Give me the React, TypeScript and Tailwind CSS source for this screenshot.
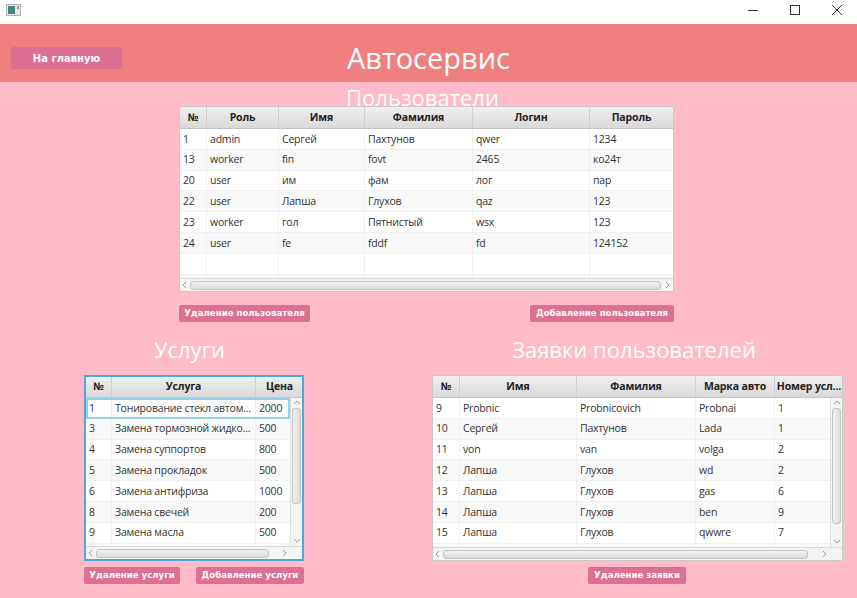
const users = [
  ['1', 'admin', 'Сергей', 'Пахтунов', 'qwer', '1234'],
  ['13', 'worker', 'fin', 'fovt', '2465', 'ко24т'],
  ['20', 'user', 'им', 'фам', 'лог', 'пар'],
  ['22', 'user', 'Лапша', 'Глухов', 'qaz', '123'],
  ['23', 'worker', 'гол', 'Пятнистый', 'wsx', '123'],
  ['24', 'user', 'fe', 'fddf', 'fd', '124152'],
  ['', '', '', '', '', ''],
  ['', '', '', '', '', ''],
]

const services = [
  ['1', 'Тонирование стекл автом...', '2000'],
  ['3', 'Замена тормозной жидко...', '500'],
  ['4', 'Замена суппортов', '800'],
  ['5', 'Замена прокладок', '500'],
  ['6', 'Замена антифриза', '1000'],
  ['8', 'Замена свечей', '200'],
  ['9', 'Замена масла', '500'],
  ['', '', ''],
]

const requests = [
  ['9', 'Probnic', 'Probnicovich', 'Probnai', '1'],
  ['10', 'Сергей', 'Пахтунов', 'Lada', '1'],
  ['11', 'von', 'van', 'volga', '2'],
  ['12', 'Лапша', 'Глухов', 'wd', '2'],
  ['13', 'Лапша', 'Глухов', 'gas', '6'],
  ['14', 'Лапша', 'Глухов', 'ben', '9'],
  ['15', 'Лапша', 'Глухов', 'qwwre', '7'],
  ['', '', '', '', ''],
]

function Btn({ label, className }: { label: string; className: string }) {
  return (
    <button className={`flex items-center justify-center whitespace-nowrap rounded-[2px] bg-[#db7093] text-white font-bold font-['DejaVu_Sans',sans-serif] ${className}`}>
      {label}
    </button>
  )
}

function Chevron({ dir }: { dir: 'left' | 'right' | 'up' | 'down' }) {
  const d = {
    left: 'M5 1 L2 4 L5 7',
    right: 'M3 1 L6 4 L3 7',
    up: 'M1 5 L4 2 L7 5',
    down: 'M1 3 L4 6 L7 3',
  }[dir]
  return (
    <svg width="8" height="8" viewBox="0 0 8 8" fill="none" stroke="#a0a0a0" strokeWidth="1" className="shrink-0">
      <path d={d} />
    </svg>
  )
}

function HScroll({ thumb, right }: { thumb: number; right: number }) {
  return (
    <div className="h-[13px] shrink-0 flex items-center bg-[#f4f4f4] border-t border-[#d8d8d8]" style={{ paddingRight: right }}>
      <div className="w-[10px] flex justify-center"><Chevron dir="left" /></div>
      <div className="flex-1 h-[9px]">
        <div className="h-full rounded-[3px] border border-[#c4c4c4] bg-gradient-to-b from-[#f0f0f0] to-[#dcdcdc]" style={{ width: thumb }} />
      </div>
      <div className="w-[12px] flex justify-center"><Chevron dir="right" /></div>
    </div>
  )
}

function VScroll({ thumb }: { thumb: number }) {
  return (
    <div className="w-[12px] shrink-0 flex flex-col items-center bg-[#f4f4f4] border-l border-[#e0e0e0]">
      <div className="h-[10px] flex items-center"><Chevron dir="up" /></div>
      <div className="flex-1 w-[9px]">
        <div className="w-full rounded-[3px] border border-[#c4c4c4] bg-gradient-to-r from-[#f0f0f0] to-[#dcdcdc]" style={{ height: thumb }} />
      </div>
      <div className="h-[12px] flex items-center"><Chevron dir="down" /></div>
    </div>
  )
}

function DataTable({
  head,
  rows,
  widths,
  vThumb,
  hThumb,
  focused,
  className,
}: {
  head: string[]
  rows: string[][]
  widths: number[]
  vThumb?: number
  hThumb: number
  focused?: boolean
  className: string
}) {
  return (
    <div className={`flex flex-col bg-white overflow-hidden font-['Open_Sans',sans-serif] text-[#333] ${focused ? 'border-2 border-[#4fa9d8]' : 'border border-[#c8c8c8]'} ${className}`}>
      <div className={`flex shrink-0 border-b border-[#c4c4c4] bg-gradient-to-b from-[#efefef] to-[#d9d9d9] text-[10.5px] tracking-[-0.15px] ${focused ? 'h-[21px]' : 'h-[22px]'}`}>
        {head.map((h, i) => (
          <div
            key={i}
            className="flex items-center justify-center shrink-0 whitespace-nowrap overflow-hidden font-bold text-[#222] border-r border-[#cfcfcf]"
            style={{ width: widths[i] }}
          >
            {h}
          </div>
        ))}
      </div>
      <div className="flex flex-1 min-h-0">
        <div className="flex-1 min-w-0 overflow-hidden text-[10.5px] tracking-[-0.2px]">
          {rows.map((r, i) => (
            <div
              key={i}
              className={`flex h-[20.8px] border-b border-[#f0f0f0] ${i % 2 ? 'bg-[#f9f9f9]' : 'bg-white'} ${focused && i === 0 ? 'outline-2 -outline-offset-2 outline-[#8fd3ea]' : ''}`}
            >
              {r.map((c, j) => (
                <div
                  key={j}
                  className="flex items-center shrink-0 pl-[3px] pt-[1px] whitespace-nowrap overflow-hidden border-r border-[#f0f0f0]"
                  style={{ width: widths[j] }}
                >
                  {c}
                </div>
              ))}
            </div>
          ))}
        </div>
        {vThumb ? <VScroll thumb={vThumb} /> : null}
      </div>
      <HScroll thumb={hThumb} right={vThumb ? 12 : 0} />
    </div>
  )
}

export default function App() {
  return (
    <div className="w-[857px] h-[598px] overflow-hidden flex flex-col bg-[#ffbbc8] font-['Open_Sans',sans-serif]">
      <div className="h-[24px] shrink-0 bg-white flex items-center justify-between">
        <svg width="15" height="12" viewBox="0 0 15 12" className="ml-[6px] -mt-[4px]">
          <rect x="0.5" y="0.5" width="14" height="11" fill="#e4e8e8" stroke="#b5b5b5" />
          <rect x="2" y="2" width="7" height="8" fill="#3f8a7e" />
          <rect x="11" y="2" width="2" height="3" fill="#7fa8a0" />
        </svg>
        <div className="flex items-center gap-[32px] pr-[15px] -mt-[4px]">
          <svg width="10" height="10" viewBox="0 0 10 10" stroke="#333" fill="none"><path d="M0 5.5 H10" /></svg>
          <svg width="10" height="10" viewBox="0 0 10 10" stroke="#333" fill="none"><rect x="0.5" y="0.5" width="9" height="9" /></svg>
          <svg width="10" height="10" viewBox="0 0 10 10" stroke="#333" fill="none"><path d="M0 0 L10 10 M10 0 L0 10" /></svg>
        </div>
      </div>

      <div className="h-[58px] shrink-0 bg-[#f08080] grid grid-cols-[1fr_auto_1fr] items-center">
        <Btn label="На главную" className="ml-[11px] mt-[10px] w-[111px] h-[22px] text-[10px]" />
        <div className="text-white text-[29px] leading-none mt-[8px]">Автосервис</div>
        <div />
      </div>

      <div className="flex flex-col items-center mr-[4px]">
        <div className="h-[24px] text-white text-[22px] leading-[31px] mr-[8px]">Пользователи</div>
        <DataTable
          className="w-[495px] h-[186px] relative"
          head={['№', 'Роль', 'Имя', 'Фамилия', 'Логин', 'Пароль']}
          rows={users}
          widths={[27, 72, 86, 108, 117, 84]}
          hThumb={471}
        />
        <div className="w-[495px] flex justify-between mt-[13px]">
          <Btn label="Удаление пользователя" className="w-[131px] h-[17px] text-[8.6px]" />
          <Btn label="Добавление пользователя" className="w-[144px] h-[17px] text-[8.6px]" />
        </div>
      </div>

      <div className="flex mt-[14px]">
        <div className="ml-[84px] w-[220px] flex flex-col items-center">
          <div className="h-[39px] text-white text-[22px] leading-[27px] mr-[9px]">Услуги</div>
          <DataTable
            focused
            className="w-[220px] h-[186px]"
            head={['№', 'Услуга', 'Цена']}
            rows={services}
            widths={[26, 144, 48]}
            vThumb={96}
            hThumb={173}
          />
          <div className="w-full flex justify-between mt-[6px]">
            <Btn label="Удаление услуги" className="w-[96px] h-[17px] text-[8.6px]" />
            <Btn label="Добавление услуги" className="w-[108px] h-[17px] text-[8.6px]" />
          </div>
        </div>

        <div className="ml-[128px] w-[411px] flex flex-col items-center">
          <div className="h-[39px] text-white text-[22px] leading-[27px] mr-[7px]">Заявки пользователей</div>
          <DataTable
            className="w-[411px] h-[186px]"
            head={['№', 'Имя', 'Фамилия', 'Марка авто', 'Номер усл...']}
            rows={requests}
            widths={[27, 117, 119, 79, 69]}
            vThumb={116}
            hThumb={365}
          />
          <div className="w-full flex justify-center mt-[6px]">
            <Btn label="Удаление заявки" className="w-[98px] h-[17px] ml-[-1px] text-[8.6px]" />
          </div>
        </div>
      </div>
    </div>
  )
}
